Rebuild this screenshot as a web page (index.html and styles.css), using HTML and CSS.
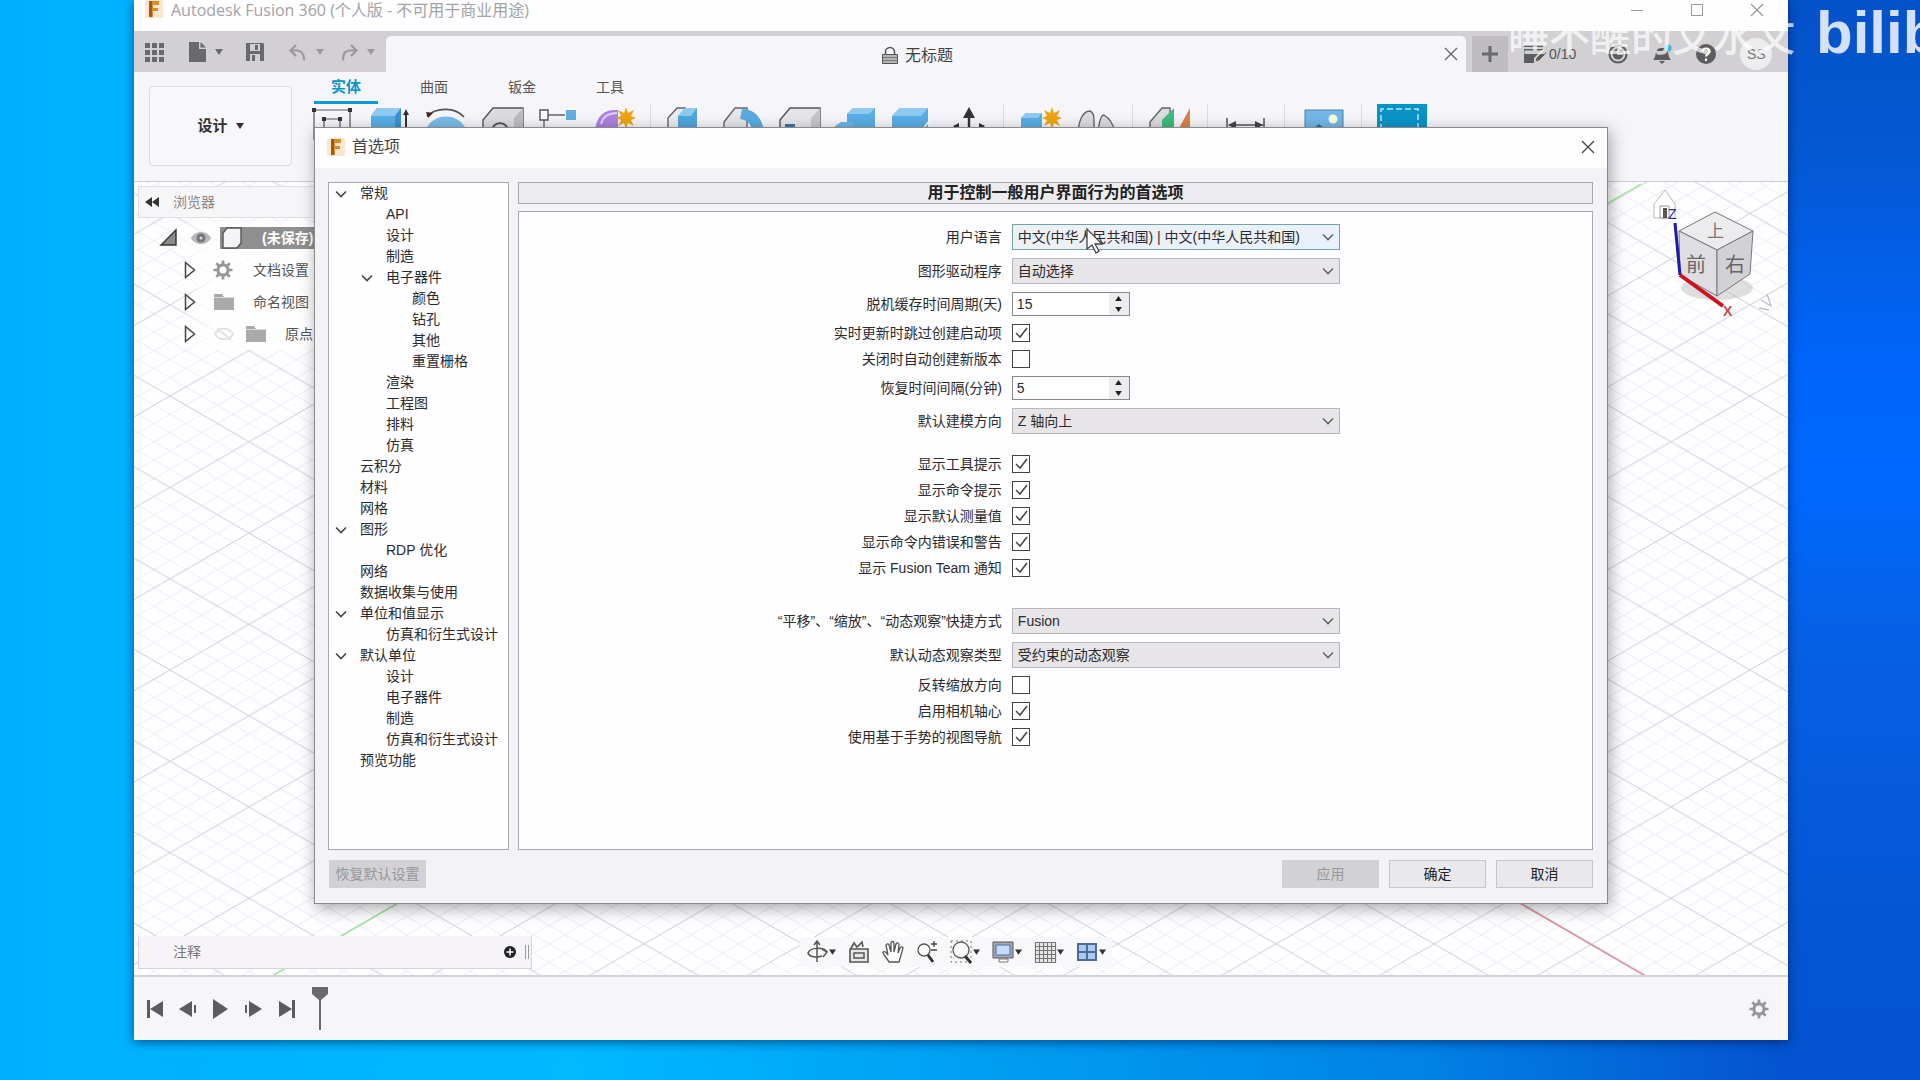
FILE: index.html
```html
<!DOCTYPE html>
<html lang="zh-CN">
<head>
<meta charset="utf-8">
<title>Autodesk Fusion 360</title>
<link rel="stylesheet" href="styles.css">
</head>
<body>
<svg class="defs" width="0" height="0" aria-hidden="true">
  <defs>
    <symbol id="chev" viewBox="0 0 12 8"><path d="M1 1.5l5 5 5-5" fill="none" stroke="currentColor" stroke-width="1.6"/></symbol>
    <symbol id="caret" viewBox="0 0 8 6"><path d="M0 0h8L4 6z" fill="currentColor"/></symbol>
    <symbol id="cross" viewBox="0 0 14 14"><path d="M1 1l12 12M13 1L1 13" fill="none" stroke="currentColor" stroke-width="1.3"/></symbol>
    <symbol id="gear" viewBox="0 0 22 22"><circle cx="11" cy="11" r="5.6" fill="none" stroke="currentColor" stroke-width="3.4"/><path d="M11 .5v4M11 17.500v4M.5 11h4M17.500 11h4M3.600 3.600l2.800 2.800M15.600 15.600l2.800 2.800M3.600 18.400l2.800-2.800M15.600 6.400l2.800-2.800" stroke="currentColor" stroke-width="3"/></symbol>
    <symbol id="flogo" viewBox="0 0 18 18"><rect width="18" height="18" rx="2" fill="#fbe6cf"/><path d="M4 1h10v4H8v3h5v3H8v6H4z" fill="#e08a2c"/><path d="M4 1h3v16H4z" fill="#9c5a1c"/></symbol>
    <symbol id="folder" viewBox="0 0 22 18"><path d="M1 1h8l2 3h10v13H1z" fill="#aaa9ac"/><path d="M1 4.500h20" stroke="#d8d7da"/></symbol>
    <symbol id="tri" viewBox="0 0 12 18"><path d="M1.500 1.500L10.500 9l-9 7.500z" fill="#fff" stroke="#444" stroke-width="1.500"/></symbol>
    <pattern id="grid" width="158" height="91.300" patternUnits="userSpaceOnUse" patternTransform="translate(36 31.500)">
      <path d="M0 18.260L126.400 91.300M0 36.520L94.800 91.300M0 54.780L63.200 91.300M0 73.040L31.600 91.300M31.600 0L158 73.040M63.200 0L158 54.780M94.800 0L158 36.520M126.400 0L158 18.260M0 73.040L126.400 0M0 54.780L94.800 0M0 36.520L63.200 0M0 18.260L31.600 0M31.600 91.300L158 18.260M63.200 91.300L158 36.520M94.800 91.300L158 54.780M126.400 91.300L158 73.040" stroke="#efeef3" fill="none"/>
      <path d="M0 0L158 91.300M0 91.300L158 0" stroke="#cfced4" fill="none"/>
    </pattern>
  </defs>
</svg>

<main class="app">
  <header class="titlebar">
    <svg class="logo"><use href="#flogo"/></svg>
    <h1 class="app-name">Autodesk Fusion 360 (个人版 - 不可用于商业用途)</h1>
    <div class="win-controls">
      <button aria-label="最小化"><svg width="14" height="14"><path d="M1 7.500h12" stroke="#999"/></svg></button>
      <button aria-label="最大化"><svg width="14" height="14"><path d="M1.500 1.500h11v11h-11z" fill="none" stroke="#999"/></svg></button>
      <button aria-label="关闭"><svg width="14" height="14"><use href="#cross"/></svg></button>
    </div>
  </header>

  <div class="toolbar">
    <div class="quick">
      <button aria-label="数据面板"><svg width="22" height="22" fill="#6a696c"><path d="M2 2h5v5H2zM9 2h5v5H9zM16 2h5v5h-5zM2 9h5v5H2zM9 9h5v5H9zM16 9h5v5h-5zM2 16h5v5H2zM9 16h5v5H9zM16 16h5v5h-5z"/></svg></button>
      <button aria-label="文件"><svg width="22" height="22"><path d="M3 1h10v7h7v13H3zM14.500 1L20 6.500h-5.500z" fill="#6a696c"/></svg><svg class="caret"><use href="#caret"/></svg></button>
      <button aria-label="保存"><svg width="22" height="22"><path d="M3 2h16l1 1v17H2V2z" fill="#6a696c"/><path d="M6 3h10v7H6zM6 13h10v7H6z" fill="#d3d0d4"/><path d="M11 4h3v5h-3zM8 14h3v6H8z" fill="#6a696c"/></svg></button>
      <div class="history">
        <button aria-label="撤消"><svg width="22" height="22"><path d="M9 4L3.500 9.500 9 15M4 9.500h6c5 0 7 3 7 10" fill="none" stroke="#9b999d" stroke-width="2.200"/></svg><svg class="caret"><use href="#caret"/></svg></button>
        <button aria-label="重做"><svg width="22" height="22"><path d="M13 4l5.500 5.500L13 15M18 9.500h-6c-5 0-7 3-7 10" fill="none" stroke="#9b999d" stroke-width="2.200"/></svg><svg class="caret"><use href="#caret"/></svg></button>
      </div>
    </div>
    <div class="doc-tab">
      <div class="doc-title">
        <svg width="18" height="20"><path d="M4.500 9V6a4.500 4.500 0 0 1 9 0v3" fill="none" stroke="#555" stroke-width="1.600"/><path d="M1.500 8.500h15v9h-15z" fill="#b5b4b7" stroke="#555"/><path d="M2 11.500h14M2 14.500h14" stroke="#777"/></svg>
        <span>无标题</span>
      </div>
      <button class="doc-close" aria-label="关闭文档"><svg width="14" height="14"><use href="#cross"/></svg></button>
    </div>
    <div class="account">
      <button class="plus" aria-label="新建"><svg width="18" height="18"><path d="M9 1v16M1 9h16" stroke="#6a696c" stroke-width="3"/></svg></button>
      <button class="jobs"><svg width="24" height="20"><path d="M1 1h19v2H1zM1 5h19l-9 9v5H1z" fill="#5d5c5f"/><path d="M12 18l1-4 8-8 3 3-8 8z" fill="#5d5c5f" stroke="#d3d0d4"/></svg><span>0/10</span></button>
      <button aria-label="作业状态"><svg width="20" height="20"><circle cx="10" cy="10" r="8.500" fill="#d8d6d9" stroke="#5d5c5f" stroke-width="2.200"/><circle cx="10" cy="10" r="5.500" fill="#5d5c5f"/><path d="M10 5v5h5" stroke="#ddd" stroke-width="1.600" fill="none"/></svg></button>
      <button aria-label="通知"><svg width="20" height="20"><path d="M1 16c3-2 2-9 5-11 1-1 2-1 4-1s3 0 4 1c3 2 2 9 5 11zM7 17h6l-3 3z" fill="#5d5c5f"/><circle cx="16" cy="4" r="3.500" fill="#35b6dd"/></svg></button>
      <button aria-label="帮助"><svg width="20" height="20"><circle cx="10" cy="10" r="10" fill="#5d5c5f"/><path d="M6.500 7.500C6.500 3.500 13.500 3.500 13.500 7.500 13.500 10 10 9.500 10 12.500M10 14.500v2.500" fill="none" stroke="#fff" stroke-width="2.200"/></svg></button>
      <button class="avatar">SS</button>
    </div>
  </div>

  <div class="ribbon">
    <div class="workspace"><button class="design"><span>设计</span><svg class="caret"><use href="#caret"/></svg></button></div>
    <div class="ribbon-main">
      <nav class="tabs">
        <a href="#" class="tab on">实体</a><a href="#" class="tab">曲面</a><a href="#" class="tab">钣金</a><a href="#" class="tab">工具</a>
      </nav>
      <div class="tools">
        <button aria-label="草图"><svg><path d="M2 6h36M2 6v30M38 6v30M12 15h16M12 15v12M28 15v12" stroke="#555" fill="none" stroke-width="1.200"/><path d="M0 4h4v4H0zM36 4h4v4h-4zM10 13h4v4h-4zM26 13h4v4h-4z" fill="#333"/></svg></button>
        <button aria-label="拉伸"><svg><path d="M3 12l6-8h24v28H3z" fill="#58aee6"/><path d="M3 12l6-8h24l-6 8z" fill="#8dcbf2"/><path d="M27 12l6-8v26l-6 4z" fill="#3d92cf"/><path d="M38 8v24" stroke="#333" stroke-width="2"/><path d="M35 11l3-6 3 6z" fill="#333"/></svg></button>
        <button aria-label="旋转"><svg><path d="M3 12C13 3 31 3 40 13" fill="none" stroke="#555" stroke-width="1.600"/><path d="M2 8l7 1-5 5z" fill="#422"/><path d="M2 26c6-18 34-18 40 0z" fill="#79bdea"/></svg></button>
        <button aria-label="孔"><svg><path d="M3 16L13 4h30v32H3z" fill="#dddcdf" stroke="#555" stroke-width="1.400"/><path d="M34 14l9-10v28l-9 4z" fill="#bdbcc0"/><path d="M12 26c2-9 14-9 16 0" fill="none" stroke="#555" stroke-width="2"/></svg></button>
        <button aria-label="阵列"><svg><path d="M12 11h17M8 16v20" stroke="#666" stroke-width="1.400"/><path d="M4 6h8v10H4z" fill="#fff" stroke="#555" stroke-width="1.400"/><path d="M30 6h10v10H30z" fill="#64aee2"/></svg></button>
        <button aria-label="创建造型"><svg><path d="M3 26C5 10 14 5 26 6v24z" fill="#ab82e0"/><path d="M9 20c2-8 7-11 16-11" stroke="#e2cffa" stroke-width="2" fill="none"/><path d="M34 3l2 6 6-3-3 6 5 2-5 2 3 6-6-3-2 6-2-6-6 3 3-6-5-2 5-2-3-6 6 3z" fill="#eea510"/></svg></button>
        <i class="sep"></i>
        <button aria-label="按拉"><svg><path d="M3 14l9-10h8v32H3z" fill="#ececee" stroke="#666" stroke-width="1.400"/><path d="M13 12l7-8h12v26H13z" fill="#4ea6e0"/><path d="M13 12l7-8h12l-6 8z" fill="#8ccaf0"/></svg></button>
        <button aria-label="圆角"><svg><path d="M3 18L14 4h12v28H3z" fill="#e6e5e8" stroke="#666" stroke-width="1.400"/><path d="M21 5c12 0 20 8 22 22H31c-1-8-5-11-12-12z" fill="#5aabdf"/></svg></button>
        <button aria-label="抽壳"><svg><path d="M3 16L13 4h30v32H3z" fill="#e6e5e8" stroke="#555" stroke-width="1.400"/><path d="M34 14l9-10v28l-9 4z" fill="#c7c6ca"/><path d="M8 20h10v8H8z" fill="#3379a8"/></svg></button>
        <button aria-label="合并"><svg><path d="M14 10l6-6h22v20H14z" fill="#58aee6"/><path d="M14 10l6-6h22l-6 6z" fill="#8dcbf2"/><path d="M2 22l6-4h12v10H2z" fill="#69b7ea"/></svg></button>
        <button aria-label="偏移面"><svg><path d="M3 12l8-8h28v22H3z" fill="#58aee6"/><path d="M3 12l8-8h28l-7 8z" fill="#8dcbf2"/><path d="M33 26l8-10" stroke="#fff" stroke-width="1.500"/></svg></button>
        <button aria-label="移动"><svg><path d="M24 12v24" stroke="#333" stroke-width="2.400"/><path d="M18 14l6-11 6 11zM8 22l6-3v8zM40 22l-6-3v8z" fill="#333"/></svg></button>
        <i class="sep"></i>
        <button aria-label="新建零部件"><svg><path d="M3 14l5-5h16v20H3z" fill="#58aee6"/><path d="M3 14l5-5h16l-4 5z" fill="#8dcbf2"/><path d="M34 3l2 6 6-3-3 6 5 2-5 2 3 6-6-3-2 6-2-6-6 3 3-6-5-2 5-2-3-6 6 3z" fill="#eea510"/></svg></button>
        <button aria-label="联接"><svg><path d="M4 28c1-12 5-21 12-21 3 1 4 4 4 9v12zM24 28c1-9 3-17 6-17 5 3 9 8 11 17z" fill="#dddcdf" stroke="#666" stroke-width="1.400"/></svg></button>
        <i class="sep"></i>
        <button aria-label="检验"><svg><path d="M3 18L15 4h8v28H3z" fill="#dcdbdf" stroke="#666" stroke-width="1.400"/><path d="M15 16l12-12v28H15z" fill="#3dbb7d"/><path d="M31 26L43 4v22z" fill="#dc8148"/></svg></button>
        <i class="sep wide"></i>
        <button aria-label="测量"><svg><path d="M3 14v14M40 14v14M5 21h34" stroke="#555" stroke-width="1.500"/><path d="M4 21l8-4v8zM39 21l-8-4v8z" fill="#444"/></svg></button>
        <i class="sep wide"></i>
        <button aria-label="插入"><svg><path d="M4 6h38v30H4z" fill="#72b8e8" stroke="#4d7e9f"/><circle cx="32" cy="15" r="4.500" fill="#f6ffdb"/><path d="M8 28l10-8 12 10z" fill="#2e6e9e"/></svg></button>
        <i class="sep wide"></i>
        <button aria-label="选择"><svg><path d="M-1 0h50v36H-1z" fill="#0a93c9"/><path d="M3 26V5h37v21" fill="none" stroke="#bfe9fa" stroke-width="1.500" stroke-dasharray="6 3"/></svg></button>
      </div>
    </div>
  </div>

  <section class="viewport">
    <svg class="scene" width="100%" height="100%" aria-hidden="true">
      <rect width="100%" height="100%" fill="url(#grid)"/>
      <path d="M136 795L1507 2" stroke="#9be89b" stroke-width="1.400"/>
      <path d="M1332 690L1513 795" stroke="#d98f98" stroke-width="1.400"/>
    </svg>
    <aside class="browser">
      <div class="browser-head"><svg width="14" height="10"><path d="M7 0v10L0 5zM14 0v10L7 5z" fill="#333"/></svg><h2>浏览器</h2></div>
      <div class="node root">
        <svg width="18" height="18"><path d="M16 1v15H1z" fill="#8b8a8d" stroke="#333" stroke-width="1.400"/></svg>
        <svg width="20" height="16"><path d="M0 8C4 0 16 0 20 8 16 16 4 16 0 8z" fill="#b7b6b9"/><circle cx="10" cy="8" r="4.500" fill="#77767a"/><circle cx="10" cy="8" r="1.500" fill="#ddd"/></svg>
        <div class="doc-node"><svg width="24" height="22"><path d="M3 6l4-5h14v15l-4 5H3z" fill="#f4f3f5" stroke="#555" stroke-width="1.400"/></svg><b>(未保存)</b></div>
      </div>
      <div class="node"><svg class="tri"><use href="#tri"/></svg><svg class="gear"><use href="#gear"/></svg><span>文档设置</span></div>
      <div class="node"><svg class="tri"><use href="#tri"/></svg><svg class="folder"><use href="#folder"/></svg><span>命名视图</span></div>
      <div class="node origin"><svg class="tri"><use href="#tri"/></svg><svg width="22" height="16"><path d="M2 8c4-7 14-7 18 0-4 7-14 7-18 0zM4 2l14 12" fill="none" stroke="#e2e1e4" stroke-width="2"/></svg><svg class="folder"><use href="#folder"/></svg><span>原点</span></div>
    </aside>

    <svg class="cube" width="130" height="140" role="img" aria-label="ViewCube">
      <path d="M7 22l11-14 10 14v14H7z" fill="#fff" stroke="#bbb4b4"/><path d="M13 24h9v12h-9z" fill="#fff" stroke="#999"/><path d="M16 26h4v10h-4z" fill="#555"/>
      <ellipse cx="70" cy="106" rx="36" ry="12" fill="#bbb" opacity=".45"/>
      <path d="M68 30l38 19-36 19-38-19z" fill="#ecebee" stroke="#777"/>
      <path d="M32 49l38 19v46L33 93z" fill="#dedde1" stroke="#777"/>
      <path d="M106 49L70 68v46l33-22z" fill="#d2d1d6" stroke="#777"/>
      <text x="60" y="55" font-size="17" fill="#777">上</text>
      <text x="39" y="90" font-size="20" fill="#666">前</text>
      <text x="78" y="90" font-size="20" fill="#666">右</text>
      <path d="M28 41l5 52" stroke="#1f1aa8" stroke-width="3"/>
      <path d="M33 93l43 31" stroke="#cc1220" stroke-width="4"/>
      <text x="21" y="37" font-size="14" fill="#2a259f">Z</text>
      <text x="76" y="134" font-size="14" font-weight="bold" fill="#c8484e">X</text>
      <path d="M114 118l10 6-4-12M112 126l10 2" fill="none" stroke="#c2c1c5" stroke-width="1.400"/>
    </svg>

    <div class="bottom-row">
      <div class="comments"><span>注释</span><button aria-label="添加注释"><svg width="14" height="14"><circle cx="7" cy="7" r="6" fill="#222"/><path d="M7 3.500v7M3.500 7h7" stroke="#fff" stroke-width="1.500"/></svg></button><i class="grip"></i></div>
      <div class="navbar">
        <button aria-label="动态观察"><svg width="22" height="24"><path d="M11 1v21M8 5l3-4 3 4M21 12c-3-5-17-5-19 1 1 4 9 5 14 3M16 9l5 3-4 5" fill="none" stroke="#555" stroke-width="1.500"/></svg><svg class="caret"><use href="#caret"/></svg></button>
        <button aria-label="观察方向"><svg width="22" height="24"><path d="M2 9h18v13H2zM3 8l3-5 3 4 5-5 1 5" fill="#e8e7ea" stroke="#555" stroke-width="1.600"/><path d="M6 13h10v5H6z" fill="none" stroke="#555" stroke-width="1.500"/></svg></button>
        <button aria-label="平移"><svg width="22" height="24"><path d="M7 22C5 18 1 15 1 12c2-1 4 1 5 3L4 5c1-2 3-1 3 0l2 7V3c0-2 3-2 3 0v9l2-8c1-2 3-1 3 1l-1 8 2-5c1-2 3-1 3 0l-4 14z" fill="#fff" stroke="#555" stroke-width="1.300"/></svg></button>
        <button aria-label="缩放"><svg width="22" height="24"><circle cx="8" cy="10" r="6" fill="#fff" stroke="#555" stroke-width="1.300"/><path d="M12 15l5 7" stroke="#333" stroke-width="3"/><path d="M18 1v6M15 4h6M15 10h6" stroke="#444" stroke-width="1.300"/></svg></button>
        <button aria-label="适合窗口"><svg width="22" height="24"><path d="M1 1h20v21H1z" fill="none" stroke="#777" stroke-dasharray="2 3"/><circle cx="11" cy="10" r="8" fill="#fafafa" stroke="#555" stroke-width="1.300"/><path d="M15 16l6 7" stroke="#333" stroke-width="3"/></svg><svg class="caret"><use href="#caret"/></svg></button>
        <button aria-label="显示设置"><svg width="22" height="24"><path d="M1 2h20v16H1z" fill="#a5a8b0" stroke="#555"/><path d="M4 5h14v10H4z" fill="#c5dbfa" stroke="#4a6fa5"/><path d="M7 19h9v3H7z" fill="#fff" stroke="#777"/></svg><svg class="caret"><use href="#caret"/></svg></button>
        <button aria-label="栅格和捕捉"><svg width="22" height="24"><path d="M1.500 2.500h20v20h-20zM5.500 2.500v20M9.500 2.500v20M13.500 2.500v20M17.500 2.500v20M1.500 6.500h20M1.500 10.500h20M1.500 14.500h20M1.500 18.500h20" fill="#eee" stroke="#77767a" stroke-width="1.200"/></svg><svg class="caret"><use href="#caret"/></svg></button>
        <button aria-label="视口"><svg width="22" height="24"><path d="M1 3h20v18H1z" fill="#4f6b96"/><path d="M3 5h7v6H3zM12 5h7v6h-7zM3 13h7v6H3zM12 13h7v6h-7z" fill="#a9c9f3"/></svg><svg class="caret"><use href="#caret"/></svg></button>
      </div>
    </div>
  </section>

  <footer class="timeline">
    <div class="transport">
      <button aria-label="开头"><svg width="18" height="20"><path d="M1 1h3v18H1zM17 2v16L4 10z" fill="#5c5b5e"/></svg></button>
      <button aria-label="上一步"><svg width="18" height="20"><path d="M13 2v16L0 10zM15 6h2v8h-2z" fill="#5c5b5e"/></svg></button>
      <button aria-label="播放"><svg width="18" height="20"><path d="M1 0v20l15-10z" fill="#5c5b5e"/></svg></button>
      <button aria-label="下一步"><svg width="18" height="20"><path d="M4 2v16l13-8zM0 6h2v8H0z" fill="#5c5b5e"/></svg></button>
      <button aria-label="结尾"><svg width="18" height="20"><path d="M14 1h3v18h-3zM1 2v16l13-8z" fill="#5c5b5e"/></svg></button>
    </div>
    <svg class="marker" width="16" height="44"><path d="M0 0h16v7l-7 6v30H7V13L0 7z" fill="#6a696c"/></svg>
    <button class="tl-gear" aria-label="时间轴设置"><svg class="gear"><use href="#gear"/></svg></button>
  </footer>

  <div class="dialog" role="dialog" aria-labelledby="dlg-title">
    <div class="dlg-head"><svg class="logo"><use href="#flogo"/></svg><h2 id="dlg-title">首选项</h2><button aria-label="关闭"><svg width="14" height="14"><use href="#cross"/></svg></button></div>
    <div class="dlg-body">
      <ul class="tree">
        <li class="l0"><svg><use href="#chev"/></svg>常规</li>
        <li class="l1">API</li>
        <li class="l1">设计</li>
        <li class="l1">制造</li>
        <li class="l1"><svg><use href="#chev"/></svg>电子器件</li>
        <li class="l2">颜色</li>
        <li class="l2">钻孔</li>
        <li class="l2">其他</li>
        <li class="l2">重置栅格</li>
        <li class="l1">渲染</li>
        <li class="l1">工程图</li>
        <li class="l1">排料</li>
        <li class="l1">仿真</li>
        <li class="l0">云积分</li>
        <li class="l0">材料</li>
        <li class="l0">网格</li>
        <li class="l0"><svg><use href="#chev"/></svg>图形</li>
        <li class="l1">RDP 优化</li>
        <li class="l0">网络</li>
        <li class="l0">数据收集与使用</li>
        <li class="l0"><svg><use href="#chev"/></svg>单位和值显示</li>
        <li class="l1">仿真和衍生式设计</li>
        <li class="l0"><svg><use href="#chev"/></svg>默认单位</li>
        <li class="l1">设计</li>
        <li class="l1">电子器件</li>
        <li class="l1">制造</li>
        <li class="l1">仿真和衍生式设计</li>
        <li class="l0">预览功能</li>
      </ul>
      <div class="content">
        <h3 class="banner">用于控制一般用户界面行为的首选项</h3>
        <form class="panel" id="prefs">
          <div class="row"><label for="f1">用户语言</label><span class="sel focus"><select id="f1"><option>中文(中华人民共和国) | 中文(中华人民共和国)</option></select><svg><use href="#chev"/></svg></span></div>
          <div class="row"><label for="f2">图形驱动程序</label><span class="sel"><select id="f2"><option>自动选择</option></select><svg><use href="#chev"/></svg></span></div>
          <div class="row"><label for="f3">脱机缓存时间周期(天)</label><span class="spin"><input id="f3" type="number" value="15"><i><svg class="up"><use href="#caret"/></svg><svg><use href="#caret"/></svg></i></span></div>
          <div class="row"><label for="f4">实时更新时跳过创建启动项</label><input id="f4" type="checkbox" checked></div>
          <div class="row"><label for="f5">关闭时自动创建新版本</label><input id="f5" type="checkbox"></div>
          <div class="row"><label for="f6">恢复时间间隔(分钟)</label><span class="spin"><input id="f6" type="number" value="5"><i><svg class="up"><use href="#caret"/></svg><svg><use href="#caret"/></svg></i></span></div>
          <div class="row"><label for="f7">默认建模方向</label><span class="sel"><select id="f7"><option>Z 轴向上</option></select><svg><use href="#chev"/></svg></span></div>
          <div class="row group"><label for="f8">显示工具提示</label><input id="f8" type="checkbox" checked></div>
          <div class="row"><label for="f9">显示命令提示</label><input id="f9" type="checkbox" checked></div>
          <div class="row"><label for="f10">显示默认测量值</label><input id="f10" type="checkbox" checked></div>
          <div class="row"><label for="f11">显示命令内错误和警告</label><input id="f11" type="checkbox" checked></div>
          <div class="row"><label for="f12">显示 Fusion Team 通知</label><input id="f12" type="checkbox" checked></div>
          <div class="row group-lg"><label for="f13">“平移”、“缩放”、“动态观察”快捷方式</label><span class="sel"><select id="f13"><option>Fusion</option></select><svg><use href="#chev"/></svg></span></div>
          <div class="row"><label for="f14">默认动态观察类型</label><span class="sel"><select id="f14"><option>受约束的动态观察</option></select><svg><use href="#chev"/></svg></span></div>
          <div class="row"><label for="f15">反转缩放方向</label><input id="f15" type="checkbox"></div>
          <div class="row"><label for="f16">启用相机轴心</label><input id="f16" type="checkbox" checked></div>
          <div class="row"><label for="f17">使用基于手势的视图导航</label><input id="f17" type="checkbox" checked></div>
        </form>
      </div>
    </div>
    <div class="dlg-foot">
      <button class="btn" disabled>恢复默认设置</button>
      <div class="actions"><button class="btn" disabled>应用</button><button class="btn">确定</button><button class="btn">取消</button></div>
    </div>
  </div>

  <svg class="pointer" width="18" height="26" aria-hidden="true"><path d="M1 1v20l5-4 4 8 3-2-4-7h7z" fill="#fff" stroke="#444" stroke-width="1.300"/></svg>
</main>
<div class="watermark"><span class="author">睡不醒的艾水文</span><span class="brand">bilibili</span></div>
</body>
</html>
```
FILE: styles.css
```css
* { box-sizing: border-box; }
html, body { height: 100%; }
body {
  margin: 0;
  min-height: 100vh;
  padding: 0 132px 40px 134px;
  display: flex;
  overflow: hidden;
  font: 14px/20px "Liberation Sans", "Noto Sans CJK SC", sans-serif;
  color: #333;
  background:
    linear-gradient(90deg, #00b0ff 0, #00b9ff 30%, #0082e6 74%, rgba(5, 96, 220, 0) 93%),
    linear-gradient(180deg, #0452c9 0, #0558d2 14%, #0064f8 32%, #0068ff 44%, #0660e4 60%, #0556d4 85%, #0552d0 100%);
}
h1, h2, h3, ul { margin: 0; padding: 0; font-weight: normal; }
button { border: 0; padding: 0; background: none; font: inherit; color: inherit; display: flex; align-items: center; justify-content: center; }
svg { display: block; flex: none; overflow: visible; }
.defs { position: absolute; }
.logo { width: 18px; height: 18px; }
.caret { width: 8px; height: 6px; }
.gear { width: 20px; height: 20px; color: #97969a; }

.app {
  position: relative;
  flex: 1;
  min-width: 0;
  display: flex;
  flex-direction: column;
  background: #fefdff;
  box-shadow: 0 2px 10px rgba(0, 20, 70, .6);
}

.titlebar { height: 31px; display: flex; align-items: flex-start; padding: 0 24px 0 11px; gap: 8px; flex: none; }
.app-name { flex: 1; font: 16px/20px "Open Sans", "Noto Sans CJK SC", sans-serif; color: #a3a2a5; }
.win-controls { display: flex; gap: 46px; color: #999; padding-top: 3px; }

.toolbar { height: 41px; flex: none; display: flex; padding-top: 5px; background: #d2d0d3; }
.quick { width: 252px; display: flex; align-items: center; gap: 21px; padding: 0 0 5px 9px; color: #6a696c; }
.quick button { gap: 7px; }
.history { display: flex; gap: 14px; color: #9b999d; }
.doc-tab { flex: 1; display: flex; align-items: center; padding: 0 8px 0 4px; background: #f6f5f9; border-radius: 5px 5px 0 0; }
.doc-title { flex: 1; display: flex; justify-content: center; align-items: center; gap: 6px; padding-top: 3px; font-size: 16px; color: #444; }
.doc-close { color: #666; }
.account { width: 322px; display: flex; align-items: center; gap: 24px; padding-left: 6px; }
.plus { width: 36px; height: 36px; background: #bfbdc0; }
.jobs { gap: 2px; margin: 0 8px 0 -9px; font-size: 14px; color: #555; }
.avatar { width: 32px; height: 32px; border-radius: 16px; background: #ededef; color: #777; }

.ribbon { height: 109px; flex: none; display: flex; background: #f6f5f9; }
.workspace { width: 180px; padding: 14px 22px 15px 15px; display: flex; }
.design { flex: 1; gap: 8px; border: 1px solid #dddce1; border-radius: 4px; background: #f8f7fb; font-size: 15px; font-weight: bold; color: #333; }
.ribbon-main { flex: 1; min-width: 0; }
.tabs { display: flex; gap: 24px; height: 32px; }
.tab { width: 64px; padding-top: 5px; text-align: center; color: #555; text-decoration: none; border-bottom: 3px solid transparent; }
.tab.on { color: #0b96c9; font-weight: bold; border-color: #0b9bd0; font-size: 15px; }
.tools { display: flex; gap: 12px; margin-left: -2px; }
.tools svg { width: 44px; height: 40px; }
.sep { width: 1px; height: 40px; margin: 0 2px; background: #dddce0; }
.sep.wide { margin: 0 4px; }

.viewport { position: relative; flex: 1; min-height: 0; display: flex; flex-direction: column; justify-content: space-between; overflow: hidden; border-top: 1px solid #cdccd1; }
.scene { position: absolute; inset: 0; }
.browser { position: relative; width: 192px; margin: 4px 0 0 4px; }
.browser-head { height: 32px; display: flex; align-items: center; gap: 14px; padding-left: 6px; margin-bottom: 4px; background: #f6f5f8; border: 1px solid #e0dfe3; color: #888; }
.browser-head h2 { font-size: 14px; }
.node { height: 32px; display: flex; align-items: center; padding-left: 46px; color: #555; background: linear-gradient(90deg, transparent 20%, rgba(255, 255, 255, .85) 40%); }
.node .tri { width: 12px; height: 18px; margin-right: 17px; }
.node .folder { width: 22px; height: 18px; }
.node span { margin-left: 18px; white-space: nowrap; }
.node .gear + span { margin-left: 20px; }
.origin .folder { margin-left: 10px; }
.root { padding-left: 22px; gap: 13px; }
.doc-node { flex: 1; height: 22px; display: flex; align-items: center; gap: 18px; margin-left: -4px; background: #8f8e91; color: #fff; white-space: nowrap; }
.cube { position: absolute; top: 0; right: 0; margin-right: 11px; }

.bottom-row { position: relative; display: flex; align-items: center; height: 34px; margin: 0 0 6px 4px; }
.comments { width: 394px; height: 33px; display: flex; align-items: center; padding: 0 2px 0 34px; background: #f6f4f8; border: 1px solid #d6d5d9; border-top: 0; color: #777; }
.comments span { flex: 1; }
.grip { width: 4px; height: 14px; margin-left: 8px; border: solid #999; border-width: 0 1px; }
.navbar { display: flex; align-items: center; gap: 12px; height: 30px; margin-left: 268px; padding: 0 6px; background: #f8f7fa; color: #333; }
.navbar button { gap: 1px; }
.navbar .caret { width: 7px; height: 6px; }

.timeline { height: 65px; flex: none; display: flex; align-items: center; padding: 0 19px 0 12px; background: #f6f5f9; border-top: 2px solid #d3d2d6; }
.transport { display: flex; gap: 15px; }
.marker { margin-left: 16px; }
.tl-gear { margin-left: auto; }

.dialog {
  position: absolute;
  top: 127px; right: 180px; bottom: 136px; left: 180px;
  display: flex;
  flex-direction: column;
  background: #f3f2f6;
  border: 1px solid #8a898d;
  box-shadow: 2px 4px 16px rgba(0, 0, 0, .35);
  color: #2b2b2d;
}
.dlg-head { height: 40px; flex: none; display: flex; align-items: center; gap: 7px; padding: 0 12px 3px; background: #fefdff; color: #444; }
.dlg-head h2 { flex: 1; font-size: 16px; }
.dlg-body { flex: 1; min-height: 0; display: flex; gap: 9px; padding: 14px 14px 0 13px; }
.tree { width: 181px; flex: none; list-style: none; background: #fefdff; border: 1px solid #a9a8ac; white-space: nowrap; }
.tree li { display: flex; align-items: center; height: 21px; line-height: 21px; padding-left: 31px; }
.tree li.l1 { padding-left: 57px; }
.tree li.l2 { padding-left: 83px; }
.tree svg { width: 12px; height: 8px; margin: 0 13px 0 -25px; color: #444; }
.content { flex: 1; min-width: 0; display: flex; flex-direction: column; gap: 7px; }
.banner { height: 22px; flex: none; border: 1px solid #a9a8ac; background: #ecebee; text-align: center; font-size: 16px; line-height: 20px; font-weight: bold; color: #222; }
.panel { flex: 1; min-height: 0; display: flex; flex-direction: column; gap: 8px; padding-top: 12px; background: #fefdff; border: 1px solid #a9a8ac; }
.row { display: grid; grid-template-columns: 45% 328px; column-gap: 10px; align-items: center; }
.row label { text-align: right; line-height: 18px; white-space: nowrap; }
.group { margin-top: 13px; }
.group-lg { margin-top: 23px; }
.sel { position: relative; height: 26px; }
.sel select { appearance: none; width: 100%; height: 100%; padding: 0 28px 0 5px; border: 1px solid #b9b7bb; border-radius: 0; background: #e7e5e8; font: inherit; color: #2b2b2d; }
.sel.focus select { border-color: #6fa3a8; background: linear-gradient(90deg, #eef0f3, #e8f1fc); }
.sel svg { position: absolute; right: 6px; top: 9px; width: 12px; height: 8px; color: #666; pointer-events: none; }
.spin { width: 118px; height: 24px; display: flex; border: 1px solid #88878b; background: #fff; }
.spin input { flex: 1; min-width: 0; border: 0; padding: 0 4px; background: none; font: inherit; color: #2b2b2d; appearance: textfield; }
.spin input::-webkit-inner-spin-button { appearance: none; display: none; }
.spin i { width: 20px; display: flex; flex-direction: column; align-items: center; justify-content: center; gap: 6px; background: #ecebee; color: #222; }
.spin svg { width: 7px; height: 5px; }
.spin .up { transform: rotate(180deg); }
.row input[type="checkbox"] { appearance: none; width: 18px; height: 18px; margin: 0; border: 1px solid #444; background: #fff; }
.row input[type="checkbox"]:checked { background: #fff url("data:image/svg+xml,%3Csvg xmlns='http://www.w3.org/2000/svg' width='16' height='16'%3E%3Cpath d='M3 8l4 4 7-9' fill='none' stroke='%23444' stroke-width='1.500'/%3E%3C/svg%3E"); }
.dlg-foot { height: 53px; flex: none; display: flex; justify-content: space-between; align-items: flex-start; padding: 10px 14px 0; }
.actions { display: flex; gap: 10px; }
.btn { width: 97px; height: 28px; border: 1px solid #c6c5c9; background: #e9e8eb; color: #222; white-space: nowrap; }
.btn:disabled { background: #d2d1d5; border-color: #d2d1d5; color: #98979b; }

.pointer { position: absolute; left: 952px; top: 228px; }
.watermark { position: absolute; top: 0; right: 0; width: 412px; height: 72px; overflow: hidden; white-space: nowrap; color: rgba(255, 255, 255, .72); pointer-events: none; }
.author { position: absolute; left: 0; top: 8px; font: 500 41px/50px "Noto Sans CJK SC", sans-serif; }
.brand { position: absolute; left: 308px; top: -2px; font: bold 60px/70px "Liberation Sans", sans-serif; color: rgba(235, 240, 255, .9); }
```
